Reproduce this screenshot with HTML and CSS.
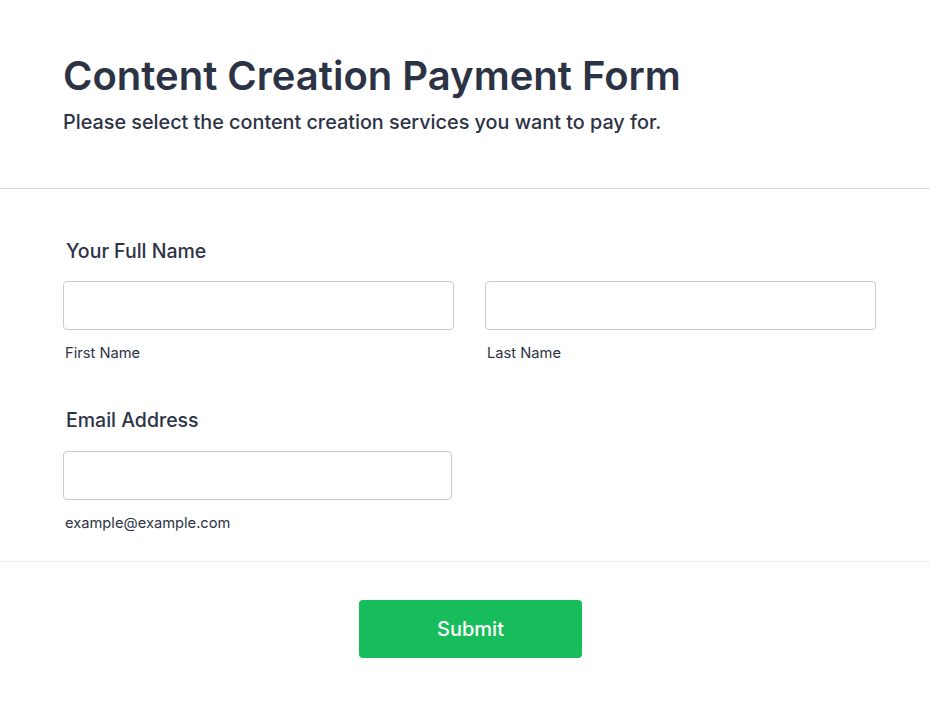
FILE: index.html
```html
<!DOCTYPE html>
<html lang="en">
<head>
    <meta charset="UTF-8">
    <meta name="viewport" content="width=device-width, initial-scale=1.0">
    <title>Content Creation Payment Form</title>
    <link rel="stylesheet" href="styles.css">
</head>
<body>
    <form class="form">
        <header class="form-header">
            <h1>Content Creation Payment Form</h1>
            <p>Please select the content creation services you want to pay for.</p>
        </header>
        <section class="form-fields">
            <div class="field">
                <label class="field-label">Your Full Name</label>
                <div class="field-row">
                    <div class="field-part">
                        <input class="field-input" type="text">
                        <span class="field-sub">First Name</span>
                    </div>
                    <div class="field-part">
                        <input class="field-input" type="text">
                        <span class="field-sub">Last Name</span>
                    </div>
                </div>
            </div>
            <div class="field">
                <label class="field-label">Email Address</label>
                <div class="field-row">
                    <div class="field-part">
                        <input class="field-input field-input-email" type="email">
                        <span class="field-sub">example@example.com</span>
                    </div>
                    <div class="field-part"></div>
                </div>
            </div>
        </section>
        <div class="form-actions">
            <button class="submit-button" type="button">Submit</button>
        </div>
    </form>
</body>
</html>
```

FILE: styles.css
```css
* {
    box-sizing: border-box;
}
body {
    margin: 0;
    font-family: Inter, "Noto Sans", sans-serif;
    background-color: #ffffff;
    color: #2c3345;
}
.form-header {
    padding: 52px 63px 52px;
    border-bottom: 1px solid #d8dae4;
}
.form-header h1 {
    margin: 0;
    font-size: 40px;
    font-weight: 600;
    line-height: 1.2;
}
.form-header p {
    margin: 10px 0 0;
    font-size: 19.8px;
    font-weight: 500;
    line-height: 1.3;
}
.form-fields {
    padding: 51px 54px 28px 63px;
    border-bottom: 1px solid #ebecf2;
}
.field {
    margin-bottom: 46px;
}
.field:last-child {
    margin-bottom: 0;
}
.field-label {
    display: block;
    padding-left: 3px;
    margin-bottom: 18px;
    font-size: 19.5px;
    font-weight: 500;
    line-height: 1.2;
}
.field-row {
    display: flex;
    gap: 31px;
}
.field-part {
    flex: 1;
    display: flex;
    flex-direction: column;
}
.field-input {
    height: 49px;
    border: 1px solid #c3cad8;
    border-radius: 4px;
    background-color: #ffffff;
}
.field-input-email {
    width: 389px;
}
.field-sub {
    padding-left: 2px;
    margin-top: 14px;
    font-size: 14.7px;
    line-height: 1.3;
    color: #2c3345;
}
.form-actions {
    display: flex;
    justify-content: center;
    padding: 38px 0 38px 11px;
}
.submit-button {
    width: 223px;
    height: 58px;
    border: none;
    border-radius: 4px;
    background-color: #18bd5b;
    color: #ffffff;
    font-family: Inter, "Noto Sans", sans-serif;
    font-size: 20px;
    font-weight: 500;
    cursor: pointer;
}
```
